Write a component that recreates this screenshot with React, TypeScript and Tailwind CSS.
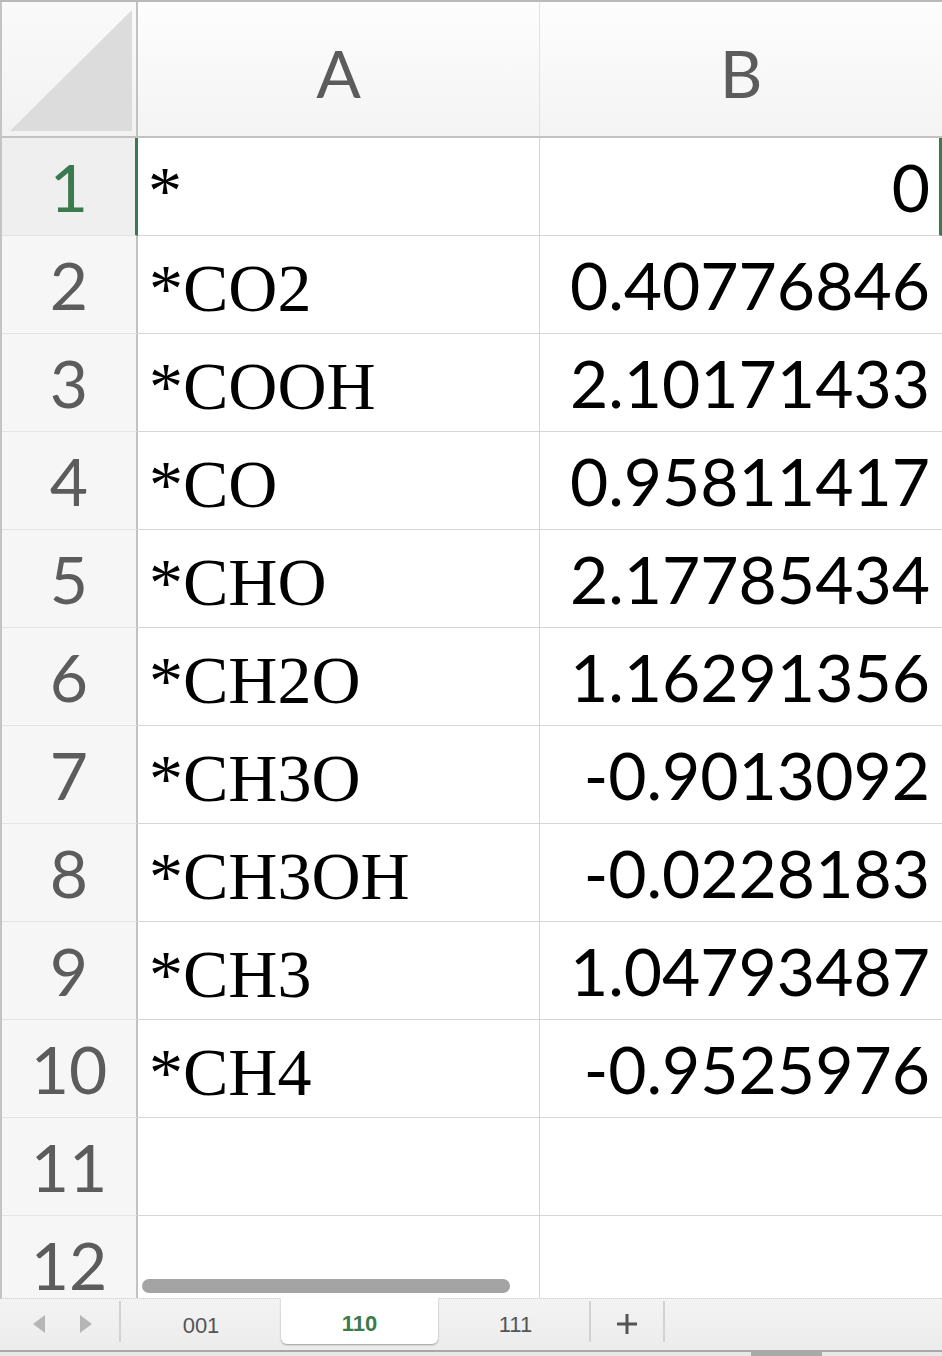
import React from "react";

const rows: [string, string][] = [
  ["*", "0"],
  ["*CO2", "0.40776846"],
  ["*COOH", "2.10171433"],
  ["*CO", "0.95811417"],
  ["*CHO", "2.17785434"],
  ["*CH2O", "1.16291356"],
  ["*CH3O", "-0.9013092"],
  ["*CH3OH", "-0.0228183"],
  ["*CH3", "1.04793487"],
  ["*CH4", "-0.9525976"],
  ["", ""],
  ["", ""],
];

const sans = { fontFamily: "Lato, 'Open Sans', sans-serif" };
const serif = { fontFamily: "'Liberation Serif', 'Times New Roman', serif" };

export default function App() {
  return (
    <div className="w-[942px] h-[1356px] overflow-hidden flex flex-col bg-white border-t-2 border-[#b9b9b9]">
      <div className="relative flex-1 overflow-hidden border-l-2 border-[#c4c4c4]">
        {/* header row */}
        <div className="flex h-[136px] border-b-2 border-[#c2c2c2]">
          <div className="w-[136px] shrink-0 border-r-2 border-[#c2c2c2] bg-gradient-to-b from-[#fafafa] to-[#f2f2f2] relative">
            <svg className="absolute left-0 top-0" width="134" height="134" viewBox="0 0 134 134">
              <polygon points="8,129 130,8 130,129" fill="#dcdcdc" />
            </svg>
          </div>
          <div className="w-[402px] shrink-0 border-r border-[#e2e2e2] bg-gradient-to-b from-[#fdfdfd] to-[#f4f4f4] flex items-end justify-center pb-[30px]">
            <span className="text-[66px] leading-[66px] text-[#5c5c5c]" style={sans}>A</span>
          </div>
          <div className="flex-1 bg-gradient-to-b from-[#fdfdfd] to-[#f4f4f4] flex items-end justify-center pb-[30px]">
            <span className="text-[66px] leading-[66px] text-[#5c5c5c]" style={sans}>B</span>
          </div>
        </div>
        {rows.map(([a, b], i) => {
          const sel = i === 0;
          return (
            <div key={i} className="flex h-[98px]">
              <div
                className={
                  "w-[136px] shrink-0 border-b border-[#e4e4e4] flex items-end justify-center pb-[15px] " +
                  (sel ? "bg-[#efefef] border-r-[3px] border-r-[#3b7a4f]" : "bg-[#f6f6f6] border-r-2 border-r-[#c2c2c2]")
                }
              >
                <span
                  className={"text-[66px] leading-[66px] " + (sel ? "text-[#3b7a4f] pl-[1px]" : "text-[#5c5c5c]")}
                  style={sans}
                >
                  {i + 1}
                </span>
              </div>
              <div className={"w-[402px] shrink-0 border-b border-r border-[#d6d6d6] flex items-end pb-[11px] " + (sel ? "pl-[10px]" : "pl-[11px]")}>
                <span className="text-[68px] leading-[68px] text-black whitespace-nowrap" style={serif}>
                  {a}
                </span>
              </div>
              <div
                className={
                  "flex-1 border-b border-[#d6d6d6] flex items-end justify-end pb-[15px] " +
                  (sel ? "border-r-[3px] border-r-[#3b7a4f] pr-[9px]" : "pr-[12px]")
                }
              >
                <span className="text-[66px] leading-[66px] text-black whitespace-nowrap" style={sans}>
                  {b}
                </span>
              </div>
            </div>
          );
        })}
        {/* horizontal scrollbar thumb */}
        <div className="absolute left-[140px] bottom-[5px] w-[368px] h-[14px] rounded-full bg-[#a4a4a4]" />
      </div>
      {/* sheet tab bar */}
      <div className="h-[52px] shrink-0 flex bg-gradient-to-b from-[#f3f3f3] to-[#ececec] border-t border-dotted border-[#cfcfcf]" style={{ fontFamily: "'Liberation Sans', Arial, sans-serif" }}>
        <div className="w-[121px] shrink-0 flex items-center gap-[33px] pl-[32px] border-r-2 border-[#d2d2d2] mt-[2px] mb-[8px] pt-[4px]">
          <svg width="14" height="20" viewBox="0 0 14 20"><polygon points="13,1 13,19 1,10" fill="#b6b6b6" /></svg>
          <svg width="14" height="20" viewBox="0 0 14 20"><polygon points="1,1 1,19 13,10" fill="#b6b6b6" /></svg>
        </div>
        <div className="w-[160px] shrink-0 flex items-center justify-center text-[22px] text-[#555] pt-[1px]">001</div>
        <div className="w-[157px] shrink-0 flex items-center justify-center text-[22px] font-bold text-[#3b7a4f] bg-white rounded-b-[6px] shadow-[0_1px_2px_rgba(0,0,0,0.35)] mb-[6px] -mt-px pt-[5px]">110</div>
        <div className="w-[153px] shrink-0 flex items-center justify-center text-[22px] text-[#555] border-r-2 border-[#d2d2d2] mt-[2px] mb-[8px] pt-[6px] pl-[4px]">111</div>
        <div className="w-[74px] shrink-0 flex items-center justify-center border-r-2 border-[#d2d2d2] mt-[2px] mb-[8px] pt-[4px]">
          <svg width="20" height="20" viewBox="0 0 20 20"><rect x="0" y="8.5" width="20" height="3" fill="#555" /><rect x="8.5" y="0" width="3" height="20" fill="#555" /></svg>
        </div>
        <div className="flex-1" />
      </div>
      <div className="h-[6px] shrink-0 border-t-2 border-[#a8a8a8] bg-[#e8e8e8] relative">
        <div className="absolute left-[751px] top-0 w-[71px] h-[4px] bg-[#a9a9a9]" />
      </div>
    </div>
  );
}
